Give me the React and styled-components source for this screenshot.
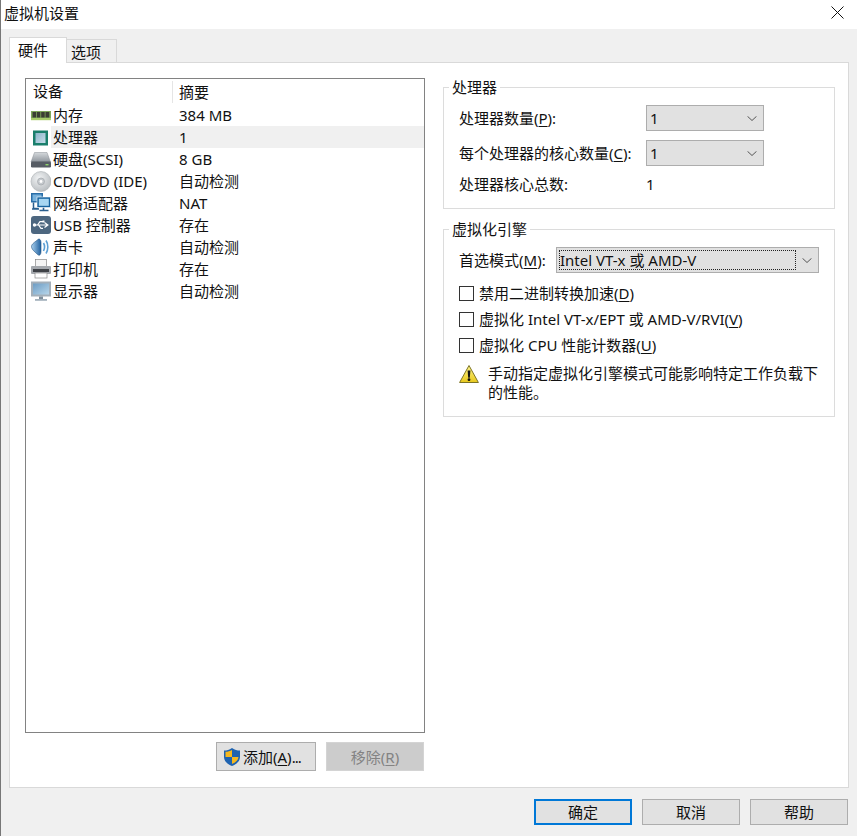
import styled, { createGlobalStyle } from "styled-components";

const GlobalStyle = createGlobalStyle`
    html, body {
        margin: 0;
        padding: 0;
        background: #ffffff;
    }
    * {
        box-sizing: border-box;
    }
`;

const Window = styled.div`
    width: 857px;
    height: 836px;
    display: flex;
    flex-direction: column;
    overflow: hidden;
    color: #111111;
    font-family: "Noto Sans", "Noto Sans CJK SC", sans-serif;
    font-size: 15px;
    line-height: 20px;
    background: #f0f0f0;
    border-left: 1px solid #777777;
`;

const TitleBar = styled.div`
    height: 29px;
    flex: none;
    display: flex;
    align-items: center;
    justify-content: space-between;
    padding: 0 13px 4px 3px;
    background: #ffffff;
`;

const Body = styled.div`
    flex: 1;
    display: flex;
    flex-direction: column;
    padding: 9px 8px 0 8px;
`;

const Tabs = styled.div`
    height: 25px;
    flex: none;
    display: flex;
    align-items: flex-end;
    margin-bottom: -1px;
    position: relative;
    z-index: 1;
`;

const Tab = styled.div`
    width: ${({ $active }) => ($active ? "58px" : "50px")};
    height: ${({ $active }) => ($active ? "26px" : "24px")};
    padding: ${({ $active }) => ($active ? "2px 0 0 8px" : "2px 0 0 4px")};
    background: ${({ $active }) => ($active ? "#ffffff" : "#f0f0f0")};
    border: 1px solid #d9d9d9;
    border-bottom: ${({ $active }) => ($active ? "none" : "1px solid #d9d9d9")};
    border-left: ${({ $active }) => ($active ? "1px solid #d9d9d9" : "none")};
`;

const Panel = styled.div`
    width: 840px;
    height: 726px;
    flex: none;
    display: flex;
    gap: 18px;
    padding: 15px 0 0 15px;
    background: #ffffff;
    border: 1px solid #d9d9d9;
`;

const LeftColumn = styled.div`
    width: 400px;
    display: flex;
    flex-direction: column;
    gap: 9px;
`;

const DeviceList = styled.div`
    height: 655px;
    border: 1px solid #828282;
`;

const ListHeader = styled.div`
    height: 25px;
    display: flex;
    align-items: center;
`;

const DeviceCol = styled.div`
    width: 147px;
    height: 22px;
    padding-left: 7px;
    border-right: 1px solid #e5e5e5;
`;

const SummaryCol = styled.div`
    padding-left: 6px;
`;

const ListRow = styled.div`
    height: 22px;
    display: flex;
    align-items: center;
    padding-left: 4px;
`;

const RowIcon = styled.svg`
    width: 21px;
    height: 21px;
    flex: none;
`;

const RowBody = styled.div`
    flex: 1;
    height: 22px;
    display: flex;
    align-items: center;
    padding-left: 2px;
    background: ${({ $selected }) => ($selected ? "#f0f0f0" : "transparent")};
`;

const RowName = styled.div`
    width: 126px;
    white-space: nowrap;
`;

const ListActions = styled.div`
    display: flex;
    justify-content: flex-end;
    gap: 10px;
    padding-right: 1px;
`;

const Button = styled.div`
    width: ${({ $width }) => $width || "98px"};
    height: ${({ $height }) => $height || "26px"};
    display: flex;
    align-items: center;
    justify-content: ${({ $start }) => ($start ? "flex-start" : "center")};
    padding-left: ${({ $start }) => ($start ? "5px" : "0")};
    gap: 1px;
    white-space: nowrap;
    background: ${({ $disabled }) => ($disabled ? "#cccccc" : "#e1e1e1")};
    color: ${({ $disabled }) => ($disabled ? "#838383" : "#111111")};
    border: ${({ $primary, $disabled }) =>
        $primary ? "2px solid #0078d7" : $disabled ? "1px solid #d4d4d4" : "1px solid #adadad"};
`;

const Dots = styled.span`
    letter-spacing: -1px;
`;

const RightColumn = styled.div`
    width: 392px;
    padding-top: 9px;
    display: flex;
    flex-direction: column;
    gap: 20px;
`;

const GroupBox = styled.div`
    position: relative;
    height: ${({ $height }) => $height};
    padding: 17px 0 0 15px;
    border: 1px solid #dcdcdc;
`;

const GroupTitle = styled.div`
    position: absolute;
    top: -11px;
    left: 5px;
    padding: 0 3px;
    background: #ffffff;
`;

const FormRow = styled.div`
    height: 26px;
    display: flex;
    align-items: center;
    margin-bottom: ${({ $gap }) => $gap};
`;

const FormLabel = styled.div`
    width: ${({ $width }) => $width};
    flex: none;
    white-space: nowrap;
`;

const Select = styled.div`
    position: relative;
    width: ${({ $width }) => $width};
    height: 26px;
    display: flex;
    align-items: center;
    justify-content: space-between;
    padding: 0 6px 0 3px;
    background: #e1e1e1;
    border: 1px solid #adadad;
`;

const FocusRing = styled.div`
    position: absolute;
    top: 2px;
    bottom: 2px;
    left: 2px;
    right: 22px;
    border: 1px dotted #222222;
`;

const Checks = styled.div`
    padding-top: 7px;
`;

const Check = styled.div`
    height: 26px;
    display: flex;
    align-items: center;
    gap: 5px;
    white-space: nowrap;
`;

const CheckBox = styled.div`
    width: 15px;
    height: 15px;
    flex: none;
    background: #ffffff;
    border: 1px solid #333333;
`;

const Warning = styled.div`
    display: flex;
    gap: 9px;
    margin-top: 6px;
    line-height: 19px;
`;

const WarningText = styled.div`
    width: 332px;
`;

const Footer = styled.div`
    flex: 1;
    display: flex;
    justify-content: flex-end;
    align-items: flex-start;
    gap: 10px;
    padding: 11px 1px 0 0;
`;

const Key = styled.span`
    text-decoration: underline;
    text-underline-offset: 2px;
    text-decoration-thickness: 1px;
`;

const Chevron = () => (
    <svg width="10" height="5" viewBox="0 0 10 5" fill="none" stroke="#555555">
        <path d="M0.5 0.3 5 4.500 9.500 0.300" />
    </svg>
);

const CloseIcon = () => (
    <svg width="13" height="13" viewBox="0 0 13 13" stroke="#111111" fill="none">
        <path d="M0.5 0.5 12.5 12.5M12.5 0.5 0.5 12.5" />
    </svg>
);

const MemoryIcon = () => (
    <RowIcon viewBox="0 0 21 21">
        <rect x="1" y="6" width="20" height="9" fill="#7fa65a" />
        <path d="M2.500 7h3.500v5.500H2.500zM6.800 7h3.500v5.500H6.800zM11.200 7h3.500v5.500h-3.500zM15.500 7h3.800v5.500H15.500z" fill="#3b3d33" />
        <rect x="1" y="13" width="20" height="2.200" fill="#a8cc6a" />
    </RowIcon>
);

const CpuIcon = () => (
    <RowIcon viewBox="0 0 21 21">
        <defs>
            <linearGradient id="cpuFill" x1="0" y1="0" x2="1" y2="1">
                <stop offset="0" stopColor="#8fb6cc" />
                <stop offset="1" stopColor="#c5dde9" />
            </linearGradient>
        </defs>
        <rect x="3" y="3.500" width="15" height="15" fill="#1a7f6c" />
        <rect x="5.500" y="6" width="10" height="10" fill="url(#cpuFill)" />
    </RowIcon>
);

const DiskIcon = () => (
    <RowIcon viewBox="0 0 21 21">
        <defs>
            <linearGradient id="diskTop" x1="0" y1="0" x2="0" y2="1">
                <stop offset="0" stopColor="#d5d9dc" />
                <stop offset="1" stopColor="#8e959c" />
            </linearGradient>
        </defs>
        <path d="M4.500 3.500h12.500l3.500 9.500H1z" fill="url(#diskTop)" stroke="#888e94" strokeWidth="0.5" />
        <rect x="1" y="12.500" width="20" height="6" rx="1.200" fill="#565c64" />
        <rect x="15.500" y="15" width="3" height="1.400" fill="#8fd36a" />
    </RowIcon>
);

const CdIcon = () => (
    <RowIcon viewBox="0 0 21 21">
        <defs>
            <radialGradient id="cdFill" cx="0.4" cy="0.35" r="0.8">
                <stop offset="0" stopColor="#f2f4f5" />
                <stop offset="1" stopColor="#aeb3b7" />
            </radialGradient>
        </defs>
        <circle cx="11" cy="10.500" r="10" fill="url(#cdFill)" stroke="#a9aeb2" strokeWidth="0.6" />
        <circle cx="11" cy="10.500" r="3.500" fill="#c6cace" stroke="#9aa0a5" strokeWidth="0.6" />
        <circle cx="11" cy="10.500" r="1.400" fill="#ffffff" />
    </RowIcon>
);

const NetworkIcon = () => (
    <RowIcon viewBox="0 0 21 21">
        <rect x="1" y="0" width="12" height="9.500" fill="#2a6ea8" />
        <rect x="2.500" y="1.500" width="9" height="6.500" fill="#79b2dc" />
        <path d="M3.500 9.500v6h5M2 16h7" stroke="#2a5f8f" strokeWidth="1.500" fill="none" />
        <rect x="7" y="4" width="13.500" height="10.500" fill="#17639f" stroke="#ffffff" strokeWidth="0.6" />
        <rect x="8.800" y="5.800" width="10" height="7" fill="#a7d6f2" />
        <path d="M13.500 14.700v2.300M9.500 17.500h9" stroke="#2a5f8f" strokeWidth="1.600" />
    </RowIcon>
);

const UsbIcon = () => (
    <RowIcon viewBox="0 0 21 21">
        <rect x="1" y="1" width="20" height="18" rx="3" fill="#4d6780" />
        <path d="M3.500 10h14M14.500 7.500l3.400 2.500-3.400 2.500M7.500 10l2.500-3.400h3M8.500 10l2.500 3.400h2" stroke="#ffffff" strokeWidth="1.200" fill="none" />
        <circle cx="4.500" cy="10" r="1.700" fill="#ffffff" />
        <rect x="12.500" y="5.500" width="2" height="2" fill="#ffffff" />
    </RowIcon>
);

const SpeakerIcon = () => (
    <RowIcon viewBox="0 0 21 21">
        <defs>
            <linearGradient id="speakerFill" x1="0" y1="0" x2="1" y2="0">
                <stop offset="0" stopColor="#a9d0ee" />
                <stop offset="1" stopColor="#1f5f9e" />
            </linearGradient>
        </defs>
        <path d="M1.500 9.500C1.500 7 5 5 8 2.500c1.500-1.200 3 .5 3 3v9c0 3-1.500 4.500-3 3.300C5 15 1.500 12.500 1.500 9.500z" fill="url(#speakerFill)" stroke="#1d4f80" strokeWidth="0.6" />
        <path d="M13.500 6c1.200 2 1.200 5.500 0 8M16 3.500c2.400 3.500 2.400 9.500 0 13" stroke="#5d9fd4" strokeWidth="1.600" fill="none" />
    </RowIcon>
);

const PrinterIcon = () => (
    <RowIcon viewBox="0 0 21 21">
        <rect x="5.500" y="0.500" width="11" height="7" fill="#f4f4f4" stroke="#8a8a8a" strokeWidth="0.7" />
        <rect x="1" y="7" width="20" height="8" rx="1" fill="#a4a8ad" />
        <rect x="3" y="10" width="16" height="3" fill="#3f4247" />
        <rect x="5" y="14" width="12" height="5" fill="#ffffff" stroke="#8a8a8a" strokeWidth="0.7" />
    </RowIcon>
);

const MonitorIcon = () => (
    <RowIcon viewBox="0 0 21 21">
        <defs>
            <linearGradient id="screenFill" x1="0" y1="0" x2="1" y2="1">
                <stop offset="0" stopColor="#6c9cc4" />
                <stop offset="1" stopColor="#b7d6ea" />
            </linearGradient>
        </defs>
        <rect x="1" y="0.500" width="20" height="15" fill="#a3afb9" />
        <rect x="3" y="2.500" width="16" height="11" fill="url(#screenFill)" />
        <path d="M9 15.500h4v2.500H9z" fill="#7f8f9c" />
        <rect x="5" y="18" width="12" height="1.800" fill="#a3b1bc" />
    </RowIcon>
);

const ShieldIcon = () => (
    <svg width="20" height="20" viewBox="0 0 20 20">
        <path d="M10 1c3 2 5 2.600 8 2.600v6.400c0 4-3.200 7-8 9-4.800-2-8-5-8-9V3.600C5 3.600 7 3 10 1z" fill="#1f63b0" />
        <path d="M10 3v7H3.500V4.800C6 4.800 8 4 10 3zM10 10h6.500c-.2 3-2.800 5.400-6.500 7z" fill="#f5b81f" />
    </svg>
);

const WarningIcon = () => (
    <svg width="20" height="20" viewBox="0 0 20 20">
        <defs>
            <linearGradient id="warnFill" x1="0" y1="0" x2="0" y2="1">
                <stop offset="0" stopColor="#fdf58a" />
                <stop offset="1" stopColor="#e8c81c" />
            </linearGradient>
        </defs>
        <path d="M10 1.500 19.400 18.500H.6z" fill="url(#warnFill)" stroke="#7d7424" strokeLinejoin="round" />
        <path d="M8.600 6.500h2.800l-.6 7.200H9.200z" fill="#111111" />
        <circle cx="10" cy="15.700" r="1.400" fill="#111111" />
    </svg>
);

const devices = [
    { Icon: MemoryIcon, name: "内存", summary: "384 MB" },
    { Icon: CpuIcon, name: "处理器", summary: "1", selected: true },
    { Icon: DiskIcon, name: "硬盘(SCSI)", summary: "8 GB" },
    { Icon: CdIcon, name: "CD/DVD (IDE)", summary: "自动检测" },
    { Icon: NetworkIcon, name: "网络适配器", summary: "NAT" },
    { Icon: UsbIcon, name: "USB 控制器", summary: "存在" },
    { Icon: SpeakerIcon, name: "声卡", summary: "自动检测" },
    { Icon: PrinterIcon, name: "打印机", summary: "存在" },
    { Icon: MonitorIcon, name: "显示器", summary: "自动检测" },
];

function App() {
    return (
        <Window>
            <GlobalStyle />
            <TitleBar>
                <span>虚拟机设置</span>
                <CloseIcon />
            </TitleBar>
            <Body>
                <Tabs>
                    <Tab $active>硬件</Tab>
                    <Tab>选项</Tab>
                </Tabs>
                <Panel>
                    <LeftColumn>
                        <DeviceList>
                            <ListHeader>
                                <DeviceCol>设备</DeviceCol>
                                <SummaryCol>摘要</SummaryCol>
                            </ListHeader>
                            {devices.map(({ Icon, name, summary, selected }) => (
                                <ListRow key={name}>
                                    <Icon />
                                    <RowBody $selected={selected}>
                                        <RowName>{name}</RowName>
                                        <div>{summary}</div>
                                    </RowBody>
                                </ListRow>
                            ))}
                        </DeviceList>
                        <ListActions>
                            <Button $width="100px" $height="29px" $start>
                                <ShieldIcon />
                                <span>
                                    添加(<Key>A</Key>)<Dots>...</Dots>
                                </span>
                            </Button>
                            <Button $height="29px" $disabled>
                                <span>
                                    移除(<Key>R</Key>)
                                </span>
                            </Button>
                        </ListActions>
                    </LeftColumn>
                    <RightColumn>
                        <GroupBox $height="122px">
                            <GroupTitle>处理器</GroupTitle>
                            <FormRow $gap="9px">
                                <FormLabel $width="187px">
                                    处理器数量(<Key>P</Key>):
                                </FormLabel>
                                <Select $width="118px">
                                    1
                                    <Chevron />
                                </Select>
                            </FormRow>
                            <FormRow $gap="5px">
                                <FormLabel $width="187px">
                                    每个处理器的核心数量(<Key>C</Key>):
                                </FormLabel>
                                <Select $width="118px">
                                    1
                                    <Chevron />
                                </Select>
                            </FormRow>
                            <FormRow>
                                <FormLabel $width="187px">处理器核心总数:</FormLabel>
                                <span>1</span>
                            </FormRow>
                        </GroupBox>
                        <GroupBox $height="188px">
                            <GroupTitle>虚拟化引擎</GroupTitle>
                            <FormRow>
                                <FormLabel $width="97px">
                                    首选模式(<Key>M</Key>):
                                </FormLabel>
                                <Select $width="263px">
                                    Intel VT-x 或 AMD-V
                                    <FocusRing />
                                    <Chevron />
                                </Select>
                            </FormRow>
                            <Checks>
                                <Check>
                                    <CheckBox />
                                    <span>
                                        禁用二进制转换加速(<Key>D</Key>)
                                    </span>
                                </Check>
                                <Check>
                                    <CheckBox />
                                    <span>
                                        虚拟化 Intel VT-x/EPT 或 AMD-V/RVI(<Key>V</Key>)
                                    </span>
                                </Check>
                                <Check>
                                    <CheckBox />
                                    <span>
                                        虚拟化 CPU 性能计数器(<Key>U</Key>)
                                    </span>
                                </Check>
                            </Checks>
                            <Warning>
                                <WarningIcon />
                                <WarningText>手动指定虚拟化引擎模式可能影响特定工作负载下的性能。</WarningText>
                            </Warning>
                        </GroupBox>
                    </RightColumn>
                </Panel>
                <Footer>
                    <Button $primary>确定</Button>
                    <Button>取消</Button>
                    <Button>帮助</Button>
                </Footer>
            </Body>
        </Window>
    );
}

export default App;
